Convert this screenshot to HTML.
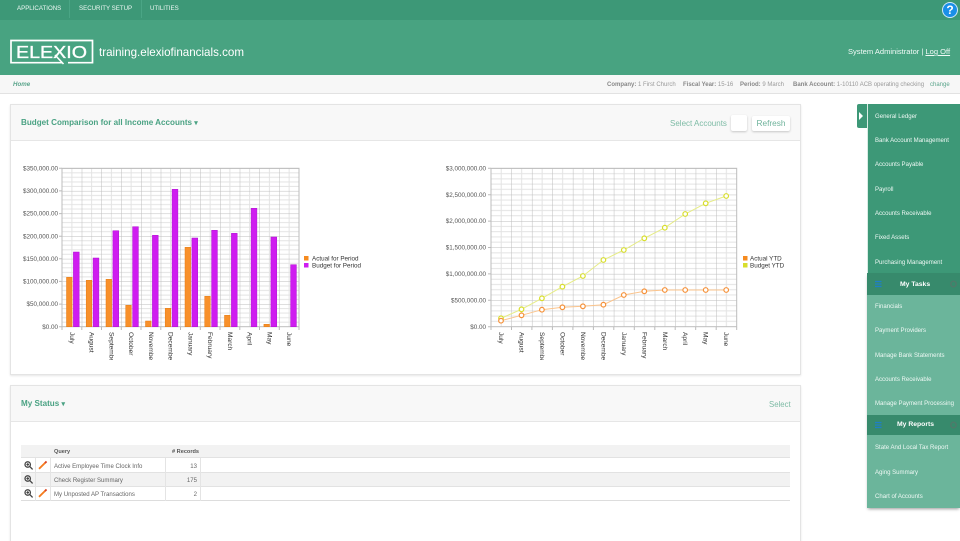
<!DOCTYPE html>
<html><head><meta charset="utf-8"><style>
html,body{margin:0;padding:0;background:#fff;width:960px;height:541px;overflow:hidden;font-family:"Liberation Sans",sans-serif}
div{position:absolute;box-sizing:border-box;white-space:nowrap}
.nav{top:0;height:20px;color:#eef8f4;font:6.15px/18px "Liberation Sans",sans-serif}
.sep{top:0;width:1px;height:18px;background:#4aa585}
.bc{top:81px;font-size:6px;line-height:8px;color:#999}
.bc b{color:#888}
.panel{left:10px;width:791px;background:#fff;border:1px solid #e4e4e4;box-shadow:0 1px 2px rgba(0,0,0,.1)}
.ph{left:0;top:0;width:789px;height:36px;background:#f8f8f8;border-bottom:1px solid #e6e6e6}
.t{font:bold 8.1px/10px "Liberation Sans",sans-serif;color:#4aa283}
.s{left:875px;color:#eef8f4;font-size:6.05px;line-height:8px}
.cell{font-size:6.05px;line-height:14px;color:#666}
</style></head><body>
<div style="left:0;top:0;width:960px;height:541px;overflow:hidden">
<div style="left:0;top:0;width:960px;height:20px;background:#3d9877;box-shadow:0 1px 2px rgba(0,0,0,.2)"></div>
<div class="nav" style="left:17px">APPLICATIONS</div><div class="sep" style="left:69px"></div>
<div class="nav" style="left:79px">SECURITY SETUP</div><div class="sep" style="left:141px"></div>
<div class="nav" style="left:150px">UTILITIES</div>
<div style="left:942px;top:2px;width:16px;height:16px;border-radius:50%;background:#1a8fe8;border:1px solid #cfe8fa;color:#fff;font:bold 12px/14px 'Liberation Sans',sans-serif;text-align:center">?</div>
<div style="left:0;top:20px;width:960px;height:55px;background:#48a381"></div>
<svg style="position:absolute;left:8px;top:38px" width="90" height="28" viewBox="0 0 90 28">
<path d="M54 24.700H3V2.500H84.500V24.700H60" fill="none" stroke="#fff" stroke-width="1.700"/>
<text x="8" y="20" font-family="Liberation Sans" font-size="17.500" fill="#fff" stroke="#fff" stroke-width=".35" textLength="71" lengthAdjust="spacingAndGlyphs">ELEXIO</text>
<path d="M47 17L55.500 26" stroke="#fff" stroke-width="1.600" fill="none"/>
</svg>
<div style="left:99px;top:45px;color:#fff;font-size:11.6px;line-height:15px">training.elexiofinancials.com</div>
<div style="left:848px;top:46px;color:#f1faf7;font:7.55px/11px 'Liberation Sans',sans-serif">System Administrator | <u>Log Off</u></div>
<div style="left:0;top:75px;width:960px;height:19px;background:#f7f7f7;border-bottom:1px solid #e2e2e2"></div>
<div style="left:13px;top:81px;font:italic bold 6.2px/8px 'Liberation Sans',sans-serif;color:#5ba58c">Home</div>
<div class="bc" style="left:607px"><b>Company:</b> 1 First Church</div>
<div class="bc" style="left:683px"><b>Fiscal Year:</b> 15-16</div>
<div class="bc" style="left:740px"><b>Period:</b> 9 March</div>
<div class="bc" style="left:793px"><b>Bank Account:</b> 1-10110 ACB operating checking</div>
<div class="bc" style="left:930px;color:#5ba58c">change</div>

<div class="panel" style="top:104px;height:271px">
<div class="ph"></div>
<div class="t" style="left:10px;top:13px">Budget Comparison for all Income Accounts <span style="font-size:7px">▾</span></div>
<div style="left:659px;top:14px;font-size:8px;line-height:10px;color:#7dbba5">Select Accounts</div>
<div style="left:720px;top:10px;width:16px;height:16px;background:#fff;border-radius:2px;box-shadow:0 1px 2px rgba(0,0,0,.2)"></div>
<div style="left:741px;top:11px;width:38px;height:15px;background:#fff;border-radius:2px;box-shadow:0 1px 2px rgba(0,0,0,.2);font-size:8.3px;line-height:14px;color:#6fb39b;text-align:center">Refresh</div>
</div>

<svg style="position:absolute;left:0;top:150px;font-family:'Liberation Sans',sans-serif" width="800" height="210" viewBox="0 150 800 210">
<defs>
<pattern id="g1" x="62" y="168.3" width="19.75" height="22.63" patternUnits="userSpaceOnUse">
<path d="M0 4.5H20M0 9H20M0 13.6H20M0 18.1H20M9.9 0V23" stroke="#e3e3e3" stroke-width="1" fill="none"/>
<path d="M0 0H20M0 0V23" stroke="#bdbdbd" stroke-width="1" fill="none"/>
</pattern>
<pattern id="g2" x="491" y="168.3" width="20.47" height="26.4" patternUnits="userSpaceOnUse">
<path d="M0 5.3H21M0 10.6H21M0 15.8H21M0 21.1H21M10.2 0V27" stroke="#e3e3e3" stroke-width="1" fill="none"/>
<path d="M0 0H21M0 0V27" stroke="#bdbdbd" stroke-width="1" fill="none"/>
</pattern>
</defs>
<rect x="62" y="168.3" width="237" height="158.4" fill="url(#g1)" stroke="#bdbdbd"/>
<path d="M59 168.3h3M59 190.9h3M59 213.6h3M59 236.2h3M59 258.8h3M59 281.4h3M59 304.1h3M59 326.7h3M62 327v3M81.8 327v3M101.5 327v3M121.3 327v3M141 327v3M160.8 327v3M180.5 327v3M200.3 327v3M220 327v3M239.8 327v3M259.5 327v3M279.3 327v3M299 327v3" stroke="#bbb"/>
<g font-size="6.3" fill="#555" text-anchor="end">
<text x="58" y="170.5">$350,000.00</text><text x="58" y="193">$300,000.00</text><text x="58" y="215.7">$250,000.00</text><text x="58" y="238.3">$200,000.00</text><text x="58" y="261">$150,000.00</text><text x="58" y="283.6">$100,000.00</text><text x="58" y="306.2">$50,000.00</text><text x="58" y="328.8">$0.00</text>
</g>
<g fill="#f8902a" stroke="#e57a10" stroke-width=".5">
<rect x="66.5" y="277.3" width="5.6" height="49.4"/><rect x="86.2" y="280.3" width="5.6" height="46.4"/><rect x="106" y="279.3" width="5.6" height="47.4"/><rect x="125.7" y="305.3" width="5.6" height="21.4"/><rect x="145.5" y="321" width="5.6" height="5.7"/><rect x="165.2" y="308.3" width="5.6" height="18.4"/><rect x="185" y="247.3" width="5.6" height="79.4"/><rect x="204.7" y="296.3" width="5.6" height="30.4"/><rect x="224.5" y="315.3" width="5.6" height="11.4"/><rect x="263.9" y="324.3" width="5.6" height="2.4"/>
</g>
<g fill="#cf1cf0" stroke="#b010d0" stroke-width=".5">
<rect x="73.4" y="252" width="5.8" height="74.7"/><rect x="93.1" y="258" width="5.8" height="68.7"/><rect x="112.9" y="230.7" width="5.8" height="96"/><rect x="132.6" y="226.7" width="5.8" height="100"/><rect x="152.4" y="235.3" width="5.8" height="91.4"/><rect x="172.1" y="189.3" width="5.8" height="137.4"/><rect x="191.9" y="238" width="5.8" height="88.7"/><rect x="211.6" y="230.3" width="5.8" height="96.4"/><rect x="231.4" y="233.3" width="5.8" height="93.4"/><rect x="251.1" y="208.3" width="5.8" height="118.4"/><rect x="270.9" y="237" width="5.8" height="89.7"/><rect x="290.6" y="264.7" width="5.8" height="62"/>
</g>
<g font-size="6.6" fill="#333">
<text transform="translate(70,332) rotate(90)">July</text><text transform="translate(89.7,332) rotate(90)">August</text><text transform="translate(109.5,332) rotate(90)">September</text><text transform="translate(129.2,332) rotate(90)">October</text><text transform="translate(149,332) rotate(90)">November</text><text transform="translate(168.7,332) rotate(90)">December</text><text transform="translate(188.5,332) rotate(90)">January</text><text transform="translate(208.2,332) rotate(90)">February</text><text transform="translate(228,332) rotate(90)">March</text><text transform="translate(247.7,332) rotate(90)">April</text><text transform="translate(267.5,332) rotate(90)">May</text><text transform="translate(287.2,332) rotate(90)">June</text>
</g>
<rect x="304" y="256" width="4.5" height="4.5" fill="#f68b1f"/><rect x="304" y="263" width="4.5" height="4.5" fill="#cf1cf0"/>
<text x="312" y="260.5" font-size="6.3" fill="#333">Actual for Period</text><text x="312" y="267.6" font-size="6.3" fill="#333">Budget for Period</text>

<rect x="491" y="168.3" width="245.7" height="158.4" fill="url(#g2)" stroke="#bdbdbd"/>
<path d="M488 168.3h3M488 194.7h3M488 221.1h3M488 247.5h3M488 273.9h3M488 300.3h3M488 326.7h3M491 327v3M511.5 327v3M531.9 327v3M552.4 327v3M572.9 327v3M593.4 327v3M613.8 327v3M634.3 327v3M654.8 327v3M675.2 327v3M695.7 327v3M716.2 327v3M736.7 327v3" stroke="#bbb"/>
<g font-size="6.3" fill="#555" text-anchor="end">
<text x="486" y="170.5">$3,000,000.00</text><text x="486" y="196.8">$2,500,000.00</text><text x="486" y="223.2">$2,000,000.00</text><text x="486" y="249.6">$1,500,000.00</text><text x="486" y="276">$1,000,000.00</text><text x="486" y="302.4">$500,000.00</text><text x="486" y="328.8">$0.00</text>
</g>
<path d="M501 320.7L521.5 315.3L541.9 309.7L562.4 307.3L582.9 306.3L603.4 304.7L623.8 295L644.3 291.3L664.8 290L685.2 290L705.7 290L726.2 290" fill="none" stroke="#fbc48c" stroke-width="1"/>
<path d="M501 318.3L521.5 309.3L541.9 298.3L562.4 286.7L582.9 276L603.4 260L623.8 250L644.3 238.3L664.8 227.7L685.2 214L705.7 203.3L726.2 196" fill="none" stroke="#e6ec84" stroke-width="1"/>
<g fill="#fff" stroke="#d8de2c" stroke-width="1.200">
<circle cx="501" cy="318.3" r="2.300"/><circle cx="521.5" cy="309.3" r="2.300"/><circle cx="541.9" cy="298.3" r="2.300"/><circle cx="562.4" cy="286.7" r="2.300"/><circle cx="582.9" cy="276" r="2.300"/><circle cx="603.4" cy="260" r="2.300"/><circle cx="623.8" cy="250" r="2.300"/><circle cx="644.3" cy="238.3" r="2.300"/><circle cx="664.8" cy="227.7" r="2.300"/><circle cx="685.2" cy="214" r="2.300"/><circle cx="705.7" cy="203.3" r="2.300"/><circle cx="726.2" cy="196" r="2.300"/>
</g>
<g fill="#fff" stroke="#f6923a" stroke-width="1.200">
<circle cx="501" cy="320.7" r="2.300"/><circle cx="521.5" cy="315.3" r="2.300"/><circle cx="541.9" cy="309.7" r="2.300"/><circle cx="562.4" cy="307.3" r="2.300"/><circle cx="582.9" cy="306.3" r="2.300"/><circle cx="603.4" cy="304.7" r="2.300"/><circle cx="623.8" cy="295" r="2.300"/><circle cx="644.3" cy="291.3" r="2.300"/><circle cx="664.8" cy="290" r="2.300"/><circle cx="685.2" cy="290" r="2.300"/><circle cx="705.7" cy="290" r="2.300"/><circle cx="726.2" cy="290" r="2.300"/>
</g>
<g font-size="6.6" fill="#333">
<text transform="translate(499,332) rotate(90)">July</text><text transform="translate(519.5,332) rotate(90)">August</text><text transform="translate(540,332) rotate(90)">September</text><text transform="translate(560.4,332) rotate(90)">October</text><text transform="translate(580.9,332) rotate(90)">November</text><text transform="translate(601.4,332) rotate(90)">December</text><text transform="translate(621.8,332) rotate(90)">January</text><text transform="translate(642.3,332) rotate(90)">February</text><text transform="translate(662.8,332) rotate(90)">March</text><text transform="translate(683.2,332) rotate(90)">April</text><text transform="translate(703.7,332) rotate(90)">May</text><text transform="translate(724.2,332) rotate(90)">June</text>
</g>
<rect x="743" y="256" width="4.5" height="4.5" fill="#f68b1f"/><rect x="743" y="263" width="4.5" height="4.5" fill="#d8de2c"/>
<text x="750" y="260.5" font-size="6.3" fill="#333">Actual YTD</text><text x="750" y="267.6" font-size="6.3" fill="#333">Budget YTD</text>
</svg>

<div class="panel" style="top:385px;height:170px">
<div class="ph"></div>
<div class="t" style="left:10px;top:13px">My Status <span style="font-size:7px">▾</span></div>
<div style="left:758px;top:14px;font-size:7.8px;line-height:10px;color:#7dbba5">Select</div>
</div>

<div style="left:21px;top:445px;width:769px;height:13px;background:#f2f2f2;border-bottom:1px solid #e2e2e2"></div>
<div style="left:21px;top:472px;width:769px;height:15px;background:#f2f2f2"></div>
<div style="left:21px;top:458px;width:769px;height:43px;border-bottom:1px solid #ddd"></div>
<div style="left:21px;top:472px;width:769px;height:1px;background:#e2e2e2"></div>
<div style="left:21px;top:486px;width:769px;height:1px;background:#e2e2e2"></div>
<div style="left:35px;top:458px;width:1px;height:43px;background:#e4e4e4"></div>
<div style="left:50px;top:458px;width:1px;height:43px;background:#e4e4e4"></div>
<div style="left:165px;top:458px;width:1px;height:43px;background:#e4e4e4"></div>
<div style="left:200px;top:458px;width:1px;height:43px;background:#e4e4e4"></div>
<div style="left:54px;top:448px;font:bold 5.600px/9px 'Liberation Sans',sans-serif;color:#555">Query</div>
<div style="left:172px;top:448px;font:bold 5.600px/9px 'Liberation Sans',sans-serif;color:#555"># Records</div>
<div class="cell" style="left:54px;top:460px">Active Employee Time Clock Info</div>
<div class="cell" style="left:54px;top:474px">Check Register Summary</div>
<div class="cell" style="left:54px;top:488px">My Unposted AP Transactions</div>
<div class="cell" style="left:165px;width:32px;top:460px;text-align:right">13</div>
<div class="cell" style="left:165px;width:32px;top:474px;text-align:right">175</div>
<div class="cell" style="left:165px;width:32px;top:488px;text-align:right">2</div>
<svg style="position:absolute;left:21px;top:458px" width="30" height="44" viewBox="0 0 30 44">
<g fill="none" stroke="#444" stroke-width="1.300"><circle cx="6.700" cy="6.500" r="2.700"/><path d="M8.800 8.600l2.800 2.800M5.400 6.500h2.600M6.700 5.200v2.600"/><circle cx="6.700" cy="20.500" r="2.700"/><path d="M8.800 22.600l2.800 2.800M5.400 20.500h2.600M6.700 19.200v2.600"/><circle cx="6.700" cy="34.500" r="2.700"/><path d="M8.800 36.600l2.800 2.800M5.400 34.500h2.600M6.700 33.200v2.600"/></g>
<path d="M18 10.800L25.500 3.500M18 38.800L25.500 31.500" stroke="#f57c1f" stroke-width="1.800" fill="none"/>
<path d="M24 5L25.500 3.500M24 33L25.500 31.500" stroke="#d9432a" stroke-width="1.800" fill="none"/>
</svg>

<div style="left:857px;top:104px;width:11px;height:24px;background:#3d9877;border-radius:2px 0 0 2px"></div>
<div style="left:859px;top:112px;width:0;height:0;border-left:4px solid #fff;border-top:4px solid transparent;border-bottom:4px solid transparent"></div>
<div style="left:867px;top:104px;width:93px;height:169px;background:#3d9877;border-left:1px solid #d8ece4"></div>
<div style="left:867px;top:273px;width:93px;height:235px;background:#6bb59b;box-shadow:0 2px 3px -1px rgba(0,0,0,.4)"></div>
<div style="left:867px;top:273px;width:93px;height:22px;background:#378a6c"></div>
<div style="left:867px;top:415px;width:93px;height:20px;background:#378a6c"></div>
<div class="s" style="top:113px">General Ledger</div>
<div class="s" style="top:137px">Bank Account Management</div>
<div class="s" style="top:161px">Accounts Payable</div>
<div class="s" style="top:186px">Payroll</div>
<div class="s" style="top:210px">Accounts Receivable</div>
<div class="s" style="top:234px">Fixed Assets</div>
<div class="s" style="top:259px">Purchasing Management</div>
<div style="left:900px;top:281px;color:#fff;font:bold 6.800px/8px 'Liberation Sans',sans-serif">My Tasks</div>
<div class="s" style="top:303px">Financials</div>
<div class="s" style="top:327px">Payment Providers</div>
<div class="s" style="top:352px">Manage Bank Statements</div>
<div class="s" style="top:376px">Accounts Receivable</div>
<div class="s" style="top:400px">Manage Payment Processing</div>
<div style="left:897px;top:421px;color:#fff;font:bold 6.800px/8px 'Liberation Sans',sans-serif">My Reports</div>
<div class="s" style="top:444px">State And Local Tax Report</div>
<div class="s" style="top:469px">Aging Summary</div>
<div class="s" style="top:493px">Chart of Accounts</div>
<svg style="position:absolute;left:867px;top:273px" width="93" height="165" viewBox="0 0 93 165">
<path d="M8 8.500h6.500M8 11h6.500M8 13.500h6.500M8 149.500h6.500M8 152h6.500M8 154.500h6.500" stroke="#1e7fc8" stroke-width="1.200"/>
<circle cx="86.500" cy="11" r="2.700" fill="none" stroke="#4f7a6a" stroke-width="1.500"/><circle cx="86.500" cy="152" r="2.700" fill="none" stroke="#4f7a6a" stroke-width="1.500"/>
</svg>
</div>
</body></html>
